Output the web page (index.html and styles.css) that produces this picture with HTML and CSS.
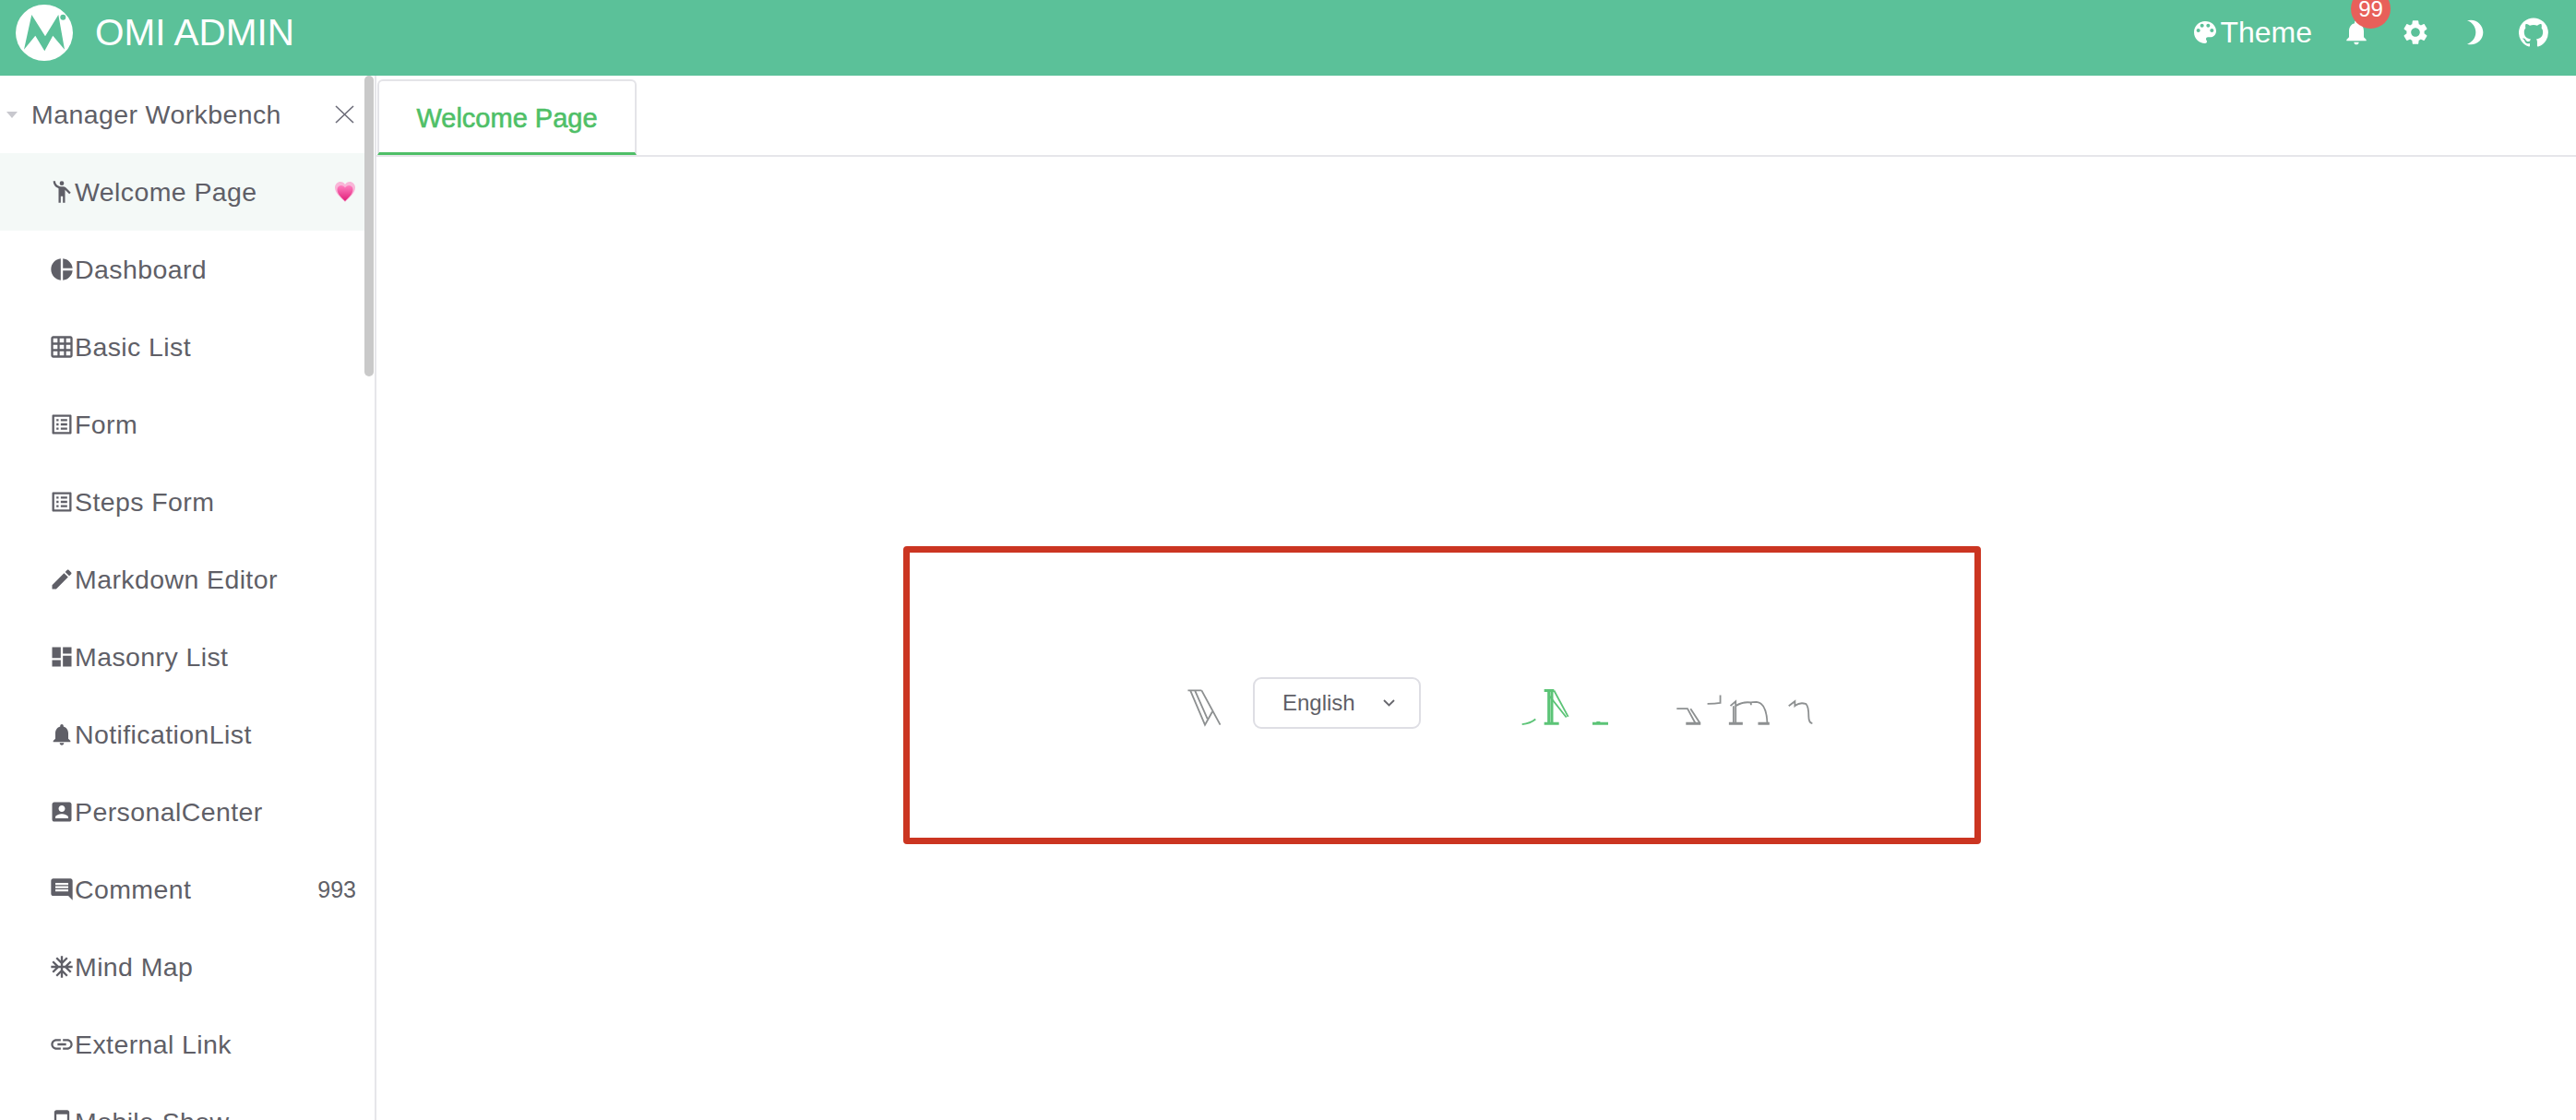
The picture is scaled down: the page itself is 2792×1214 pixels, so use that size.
FILE: index.html
```html
<!DOCTYPE html>
<html lang="en">

<head>
    <meta charset="UTF-8">
    <title>OMI ADMIN</title>
    <link rel="stylesheet" href="styles.css">
</head>

<body>
    <div class="app">
        <header class="top-bar">
            <svg class="logo" viewBox="0 0 62 61">
                <ellipse cx="31" cy="30.5" rx="31" ry="30.5" fill="#fff"></ellipse>
                <path d="M9 48.7L17.3 11 32 34.3 46.3 11 53 48.7 40.3 33.7 31.3 50.3 21.3 33.7z" fill="#5bc199"></path>
                <circle cx="51.3" cy="13.7" r="3" fill="#5bc199"></circle>
            </svg>
            <span class="brand">OMI ADMIN</span>
            <div class="top-actions">
                <div class="theme-button">
                    <svg class="top-icon" viewBox="0 0 24 24"><path d="M12 3c-4.97 0-9 4.03-9 9s4.03 9 9 9c.83 0 1.5-.67 1.5-1.5 0-.39-.15-.74-.39-1.01-.23-.26-.38-.61-.38-.99 0-.83.67-1.5 1.5-1.5H16c2.76 0 5-2.24 5-5 0-4.42-4.03-8-9-8zm-5.5 9c-.83 0-1.5-.67-1.5-1.5S5.67 9 6.5 9 8 9.67 8 10.5 7.33 12 6.5 12zm3-4C8.67 8 8 7.33 8 6.5S8.67 5 9.5 5s1.5.67 1.5 1.5S10.33 8 9.5 8zm5 0c-.83 0-1.5-.67-1.5-1.5S13.67 5 14.5 5s1.5.67 1.5 1.5S15.33 8 14.5 8zm3 4c-.83 0-1.5-.67-1.5-1.5S16.67 9 17.5 9s1.5.67 1.5 1.5-.67 1.5-1.5 1.5z"></path></svg>
                    <span>Theme</span>
                </div>
                <div class="bell">
                    <svg class="top-icon" viewBox="0 0 24 24"><path d="M12 22c1.1 0 2-.9 2-2h-4c0 1.1.89 2 2 2zm6-6v-5c0-3.07-1.64-5.64-4.5-6.32V4c0-.83-.67-1.5-1.5-1.5s-1.5.67-1.5 1.5v.68C7.63 5.36 6 7.92 6 11v5l-2 2v1h16v-1l-2-2z"></path></svg>
                    <span class="badge">99</span>
                </div>
                <svg class="top-icon" viewBox="0 0 24 24"><path d="M19.14 12.94c.04-.3.06-.61.06-.94 0-.32-.02-.64-.07-.94l2.03-1.58c.18-.14.23-.41.12-.61l-1.92-3.32c-.12-.22-.37-.29-.59-.22l-2.39.96c-.5-.38-1.03-.7-1.62-.94l-.36-2.54c-.04-.24-.24-.41-.48-.41h-3.84c-.24 0-.43.17-.47.41l-.36 2.54c-.59.24-1.13.57-1.62.94l-2.39-.96c-.22-.08-.47 0-.59.22L2.74 8.87c-.12.21-.08.47.12.61l2.03 1.58c-.05.3-.09.63-.09.94s.02.64.07.94l-2.03 1.58c-.18.14-.23.41-.12.61l1.92 3.32c.12.22.37.29.59.22l2.39-.96c.5.38 1.03.7 1.62.94l.36 2.54c.05.24.24.41.48.41h3.84c.24 0 .44-.17.47-.41l.36-2.54c.59-.24 1.13-.56 1.62-.94l2.39.96c.22.08.47 0 .59-.22l1.92-3.32c.12-.22.07-.47-.12-.61l-2.01-1.58zM12 15.6c-1.98 0-3.6-1.62-3.6-3.6s1.62-3.6 3.6-3.6 3.6 1.62 3.6 3.6-1.62 3.6-3.6 3.6z"></path></svg>
                <svg class="top-icon" viewBox="0 0 24 24"><path d="M9 2c-1.05 0-2.05.16-3 .46 4.06 1.27 7 5.06 7 9.54 0 4.48-2.94 8.27-7 9.54.95.3 1.95.46 3 .46 5.52 0 10-4.48 10-10S14.52 2 9 2z"></path></svg>
                <svg class="top-icon" viewBox="0 0 24 24"><path d="M12 .3a12 12 0 0 0-3.8 23.38c.6.11.82-.26.82-.58l-.01-2.05c-3.34.73-4.04-1.61-4.04-1.61-.55-1.39-1.33-1.76-1.33-1.76-1.09-.74.08-.73.08-.73 1.2.09 1.84 1.24 1.84 1.24 1.07 1.83 2.8 1.3 3.49 1 .1-.78.42-1.3.76-1.6-2.67-.3-5.47-1.33-5.47-5.93 0-1.31.47-2.38 1.24-3.22-.14-.3-.54-1.52.1-3.18 0 0 1-.32 3.3 1.23a11.5 11.5 0 0 1 6 0c2.28-1.55 3.29-1.23 3.29-1.23.64 1.66.24 2.88.12 3.18a4.65 4.65 0 0 1 1.23 3.22c0 4.61-2.8 5.63-5.48 5.92.42.36.81 1.1.81 2.22l-.01 3.29c0 .32.2.7.82.57A12 12 0 0 0 12 .3z"></path></svg>
            </div>
        </header>

        <div class="content">
            <aside class="sidebar">
                <nav class="menu">
                    <div class="menu-group">
                        <span class="caret"></span>
                        <span class="menu-label">Manager Workbench</span>
                        <svg class="close-icon" viewBox="0 0 21 20"><path d="M1 1L20 19M20 1L1 19"></path></svg>
                    </div>
                    <a class="menu-item menu-item-active">
                        <svg class="menu-icon" viewBox="0 0 24 24"><path d="M12 2a2 2 0 1 0 0 4 2 2 0 0 0 0-4z"></path><path d="M15.89 8.11C15.5 7.72 14.83 7 13.53 7h-2.54C8.24 6.99 6 4.75 6 2H4c0 3.16 2.11 5.84 5 6.71V22h2v-6h2v6h2V10.05L18.95 14l1.41-1.41-4.47-4.48z"></path></svg>
                        <span class="menu-label">Welcome Page</span>
                        <svg class="heart" viewBox="0 0 22 22">
                            <defs>
                                <linearGradient id="heart-fill" x1="0" y1="0" x2="0" y2="1">
                                    <stop offset="0" stop-color="#ff7fc0"></stop>
                                    <stop offset="1" stop-color="#e01f78"></stop>
                                </linearGradient>
                            </defs>
                            <path d="M11 22C6 17 0 12 0 6.500 0 2.500 3 0 6 0c2 0 4 1 5 3 1-2 3-3 5-3 3 0 6 2.500 6 6.500C22 12 16 17 11 22z" fill="#f9b6d8"></path>
                            <path d="M11 21C7 17 2.500 13 2.500 8.500 2.500 5.500 4.500 4 6.800 4 8.500 4 10.200 5 11 6.500 11.800 5 13.500 4 15.200 4c2.300 0 4.300 1.500 4.300 4.500C19.500 13 15 17 11 21z" fill="url(#heart-fill)"></path>
                        </svg>
                    </a>
                    <a class="menu-item">
                        <svg class="menu-icon" viewBox="0 0 24 24"><path d="M11 2v20c-5.070-.5-9-4.790-9-10s3.930-9.500 9-10zm2.030 0v8.990H22c-.47-4.740-4.240-8.520-8.970-8.990zm0 11.010V22c4.740-.47 8.500-4.250 8.970-8.990h-8.970z"></path></svg>
                        <span class="menu-label">Dashboard</span>
                    </a>
                    <a class="menu-item">
                        <svg class="menu-icon" viewBox="0 0 24 24"><path d="M20 2H4c-1.100 0-2 .9-2 2v16c0 1.100.9 2 2 2h16c1.100 0 2-.9 2-2V4c0-1.100-.9-2-2-2zM8 20H4v-4h4v4zm0-6H4v-4h4v4zm0-6H4V4h4v4zm6 12h-4v-4h4v4zm0-6h-4v-4h4v4zm0-6h-4V4h4v4zm6 12h-4v-4h4v4zm0-6h-4v-4h4v4zm0-6h-4V4h4v4z"></path></svg>
                        <span class="menu-label">Basic List</span>
                    </a>
                    <a class="menu-item">
                        <svg class="menu-icon" viewBox="0 0 24 24"><path d="M19 5v14H5V5h14m1.100-2H3.900c-.5 0-.9.4-.9.9v16.200c0 .4.4.9.9.9h16.200c.4 0 .9-.5.9-.9V3.900c0-.5-.5-.9-.9-.9zM11 7h6v2h-6V7zm0 4h6v2h-6v-2zm0 4h6v2h-6zM7 7h2v2H7zm0 4h2v2H7zm0 4h2v2H7z"></path></svg>
                        <span class="menu-label">Form</span>
                    </a>
                    <a class="menu-item">
                        <svg class="menu-icon" viewBox="0 0 24 24"><path d="M19 5v14H5V5h14m1.100-2H3.900c-.5 0-.9.4-.9.9v16.200c0 .4.4.9.9.9h16.200c.4 0 .9-.5.9-.9V3.900c0-.5-.5-.9-.9-.9zM11 7h6v2h-6V7zm0 4h6v2h-6v-2zm0 4h6v2h-6zM7 7h2v2H7zm0 4h2v2H7zm0 4h2v2H7z"></path></svg>
                        <span class="menu-label">Steps Form</span>
                    </a>
                    <a class="menu-item">
                        <svg class="menu-icon" viewBox="0 0 24 24"><path d="M3 17.250V21h3.750L17.810 9.940l-3.750-3.750L3 17.250zM20.710 7.040c.39-.39.39-1.020 0-1.410l-2.340-2.340c-.39-.39-1.020-.39-1.410 0l-1.830 1.830 3.750 3.750 1.830-1.830z"></path></svg>
                        <span class="menu-label">Markdown Editor</span>
                    </a>
                    <a class="menu-item">
                        <svg class="menu-icon" viewBox="0 0 24 24"><path d="M3 13h8V3H3v10zm0 8h8v-6H3v6zm10 0h8V11h-8v10zm0-18v6h8V3h-8z"></path></svg>
                        <span class="menu-label">Masonry List</span>
                    </a>
                    <a class="menu-item">
                        <svg class="menu-icon" viewBox="0 0 24 24"><path d="M12 22c1.100 0 2-.9 2-2h-4c0 1.100.89 2 2 2zm6-6v-5c0-3.070-1.640-5.640-4.500-6.320V4c0-.83-.67-1.500-1.500-1.500s-1.500.67-1.500 1.500v.68C7.630 5.360 6 7.920 6 11v5l-2 2v1h16v-1l-2-2z"></path></svg>
                        <span class="menu-label">NotificationList</span>
                    </a>
                    <a class="menu-item">
                        <svg class="menu-icon" viewBox="0 0 24 24"><path d="M3 5v14c0 1.100.89 2 2 2h14c1.100 0 2-.9 2-2V5c0-1.100-.9-2-2-2H5c-1.110 0-2 .9-2 2zm12 4c0 1.660-1.340 3-3 3s-3-1.340-3-3 1.340-3 3-3 3 1.340 3 3zm-9 8c0-2 4-3.100 6-3.100s6 1.100 6 3.100v1H6v-1z"></path></svg>
                        <span class="menu-label">PersonalCenter</span>
                    </a>
                    <a class="menu-item">
                        <svg class="menu-icon" viewBox="0 0 24 24"><path d="M21.990 4c0-1.100-.89-2-1.990-2H4c-1.100 0-2 .9-2 2v12c0 1.100.9 2 2 2h14l4 4-.01-18zM18 14H6v-2h12v2zm0-3H6V9h12v2zm0-3H6V6h12v2z"></path></svg>
                        <span class="menu-label">Comment</span>
                        <span class="menu-count">993</span>
                    </a>
                    <a class="menu-item">
                        <svg class="menu-icon" viewBox="0 0 24 24"><path d="M22 11h-4.170l3.240-3.240-1.410-1.420L15 11h-2V9l4.660-4.660-1.420-1.410L13 6.170V2h-2v4.170L7.760 2.930 6.340 4.340 11 9v2H9L4.340 6.340 2.930 7.760 6.170 11H2v2h4.170l-3.240 3.240 1.410 1.420L9 13h2v2l-4.660 4.660 1.420 1.410L11 17.830V22h2v-4.170l3.240 3.240 1.420-1.410L13 15v-2h2l4.660 4.660 1.410-1.420L17.830 13H22z"></path></svg>
                        <span class="menu-label">Mind Map</span>
                    </a>
                    <a class="menu-item">
                        <svg class="menu-icon" viewBox="0 0 24 24"><path d="M3.900 12c0-1.710 1.390-3.100 3.100-3.100h4V7H7c-2.760 0-5 2.240-5 5s2.240 5 5 5h4v-1.900H7c-1.710 0-3.100-1.390-3.100-3.100zM8 13h8v-2H8v2zm9-6h-4v1.900h4c1.710 0 3.100 1.390 3.100 3.100s-1.390 3.100-3.100 3.100h-4V17h4c2.760 0 5-2.240 5-5s-2.240-5-5-5z"></path></svg>
                        <span class="menu-label">External Link</span>
                    </a>
                    <a class="menu-item">
                        <svg class="menu-icon" viewBox="0 0 24 24"><path d="M17 1.010L7 1c-1.100 0-2 .9-2 2v18c0 1.100.9 2 2 2h10c1.100 0 2-.9 2-2V3c0-1.100-.9-1.990-2-1.990zM17 19H7V5h10v14z"></path></svg>
                        <span class="menu-label">Mobile Show</span>
                    </a>
                </nav>
                <div class="scroll-thumb"></div>
            </aside>

            <main class="main">
                <div class="tabs">
                    <div class="tab">Welcome Page</div>
                </div>
                <section class="demo-box">
                    <!-- half drawn strokes of the animated heading -->
                    <svg class="scrap scrap-first" viewBox="135 105 120 130">
                        <path d="M142 115H187M150 115L198 228L222 185M165 115L206 208M187 115L248 228"></path>
                    </svg>
                    <div class="lang-select">
                        <span>English</span>
                        <svg class="chevron" viewBox="0 0 13 8"><path d="M1 1L6.500 6.500L12 1"></path></svg>
                    </div>
                    <svg class="scrap scrap-green" viewBox="110 75 300 125">
                        <path d="M118 195Q145 192 162 178"></path>
                        <path class="thick" d="M190 85H222M205 85V192M215 85V192M190 192H238M347 192H398"></path>
                        <path d="M222 85L268 170M205 100L262 172M360 188H372"></path>
                    </svg>
                    <svg class="scrap scrap-last" viewBox="610 90 460 110">
                        <path d="M620 144H655L680 190M665 144L695 190"></path>
                        <path class="thick" d="M650 192H698M790 192H835M885 192H922"></path>
                        <path d="M720 128Q745 128 762 125M762 100V128"></path>
                        <path d="M795 135L812 120V190M805 135V190M812 135Q835 120 862 124Q864 122 880 122Q912 125 915 190M862 124V132"></path>
                        <path d="M985 135L1005 120V135Q1020 122 1040 128Q1050 135 1050 170Q1050 190 1062 192"></path>
                    </svg>
                </section>
            </main>
        </div>
    </div>
</body>

</html>
```

FILE: styles.css
```css
* {
    box-sizing: border-box;
}

body {
    margin: 0;
    padding: 0;
    font-family: "Liberation Sans", Arial, sans-serif;
    background-color: #fff;
    color: #5f5f67;
}

.app {
    height: 100vh;
    display: flex;
    flex-direction: column;
    overflow: hidden;
}

/* Green bar on top */
.top-bar {
    height: 82px;
    flex: none;
    display: flex;
    align-items: center;
    padding: 0 30px 12px 17px;
    background-color: #5bc199;
    color: #fff;
}

.logo {
    width: 62px;
    height: 61px;
}

.brand {
    margin-left: 24px;
    font-size: 40.5px;
}

.top-actions {
    margin-left: auto;
    display: flex;
    align-items: center;
    gap: 32px;
}

.theme-button {
    display: flex;
    align-items: center;
    font-size: 32px;
}

.top-icon {
    width: 32px;
    height: 32px;
    fill: #fff;
}

.bell {
    position: relative;
    height: 32px;
}

.badge {
    position: absolute;
    top: -31px;
    left: 10px;
    width: 43px;
    height: 43px;
    border-radius: 50%;
    background-color: #e8605a;
    font-size: 24px;
    line-height: 43px;
    text-align: center;
}

.content {
    flex: 1;
    display: flex;
    min-height: 0;
}

/* Left menu */
.sidebar {
    width: 408px;
    flex: none;
    display: flex;
    border-right: 2px solid #e6e6ea;
}

.menu {
    width: 395px;
    flex: none;
}

.menu-group,
.menu-item {
    height: 84px;
    display: flex;
    align-items: center;
    font-size: 28.5px;
    letter-spacing: 0.4px;
}

.menu-group {
    padding: 0 11px 0 7px;
}

.caret {
    width: 0;
    height: 0;
    border-left: 6px solid transparent;
    border-right: 6px solid transparent;
    border-top: 7px solid #c8c8ce;
    margin-right: 15px;
}

.close-icon {
    width: 21px;
    height: 20px;
    margin-left: auto;
    fill: none;
    stroke: #6b6b78;
    stroke-width: 1.6;
}

.menu-item {
    padding: 0 9px 0 53px;
}

.menu-item-active {
    background-color: #f4f9f7;
}

.menu-icon {
    width: 28px;
    height: 28px;
    flex: none;
    fill: #5f5f67;
}

.menu-count {
    margin-left: auto;
    font-size: 25px;
    letter-spacing: 0;
}

.heart {
    width: 22px;
    height: 22px;
    margin: 0 1px 0 auto;
}

.scroll-thumb {
    width: 10px;
    height: 326px;
    border-radius: 5px;
    background-color: #c9c9c9;
}

/* Right part */
.main {
    flex: 1;
    min-width: 0;
}

.tabs {
    height: 88px;
    padding: 4px 0 0 1px;
    border-bottom: 2px solid #e6e6ea;
}

.tab {
    width: 281px;
    height: 82px;
    margin-bottom: -2px;
    padding-top: 24px;
    border: 2px solid #e4e4e8;
    border-bottom: 3px solid #4fbf67;
    border-radius: 6px 6px 0 0;
    background-color: #fff;
    color: #4fbf67;
    font-size: 29px;
    text-align: center;
    -webkit-text-stroke: 0.6px #4fbf67;
}

.demo-box {
    width: 1168px;
    height: 323px;
    margin: 422px 0 0 571px;
    padding: 135px 0 0 299px;
    display: flex;
    align-items: flex-start;
    border: 7px solid #cb3521;
    border-radius: 4px;
}

.lang-select {
    width: 182px;
    height: 56px;
    margin-left: 33px;
    padding: 0 26px 0 30px;
    display: flex;
    align-items: center;
    justify-content: space-between;
    border: 2px solid #dedee4;
    border-radius: 9px;
    font-size: 24px;
}

.chevron {
    width: 13px;
    height: 8px;
    fill: none;
    stroke: #66666c;
    stroke-width: 1.8;
}

.scrap {
    flex: none;
    fill: none;
    stroke: #8d9091;
    stroke-width: 5.5;
}

.scrap .thick {
    stroke-width: 9;
}

.scrap-first {
    width: 40px;
    height: 43px;
    margin-top: 11px;
}

.scrap-green {
    width: 100px;
    height: 42px;
    margin: 11px 0 0 107px;
    stroke: #5cc477;
}

.scrap-last {
    width: 153px;
    height: 37px;
    margin: 16px 0 0 67px;
}
```
